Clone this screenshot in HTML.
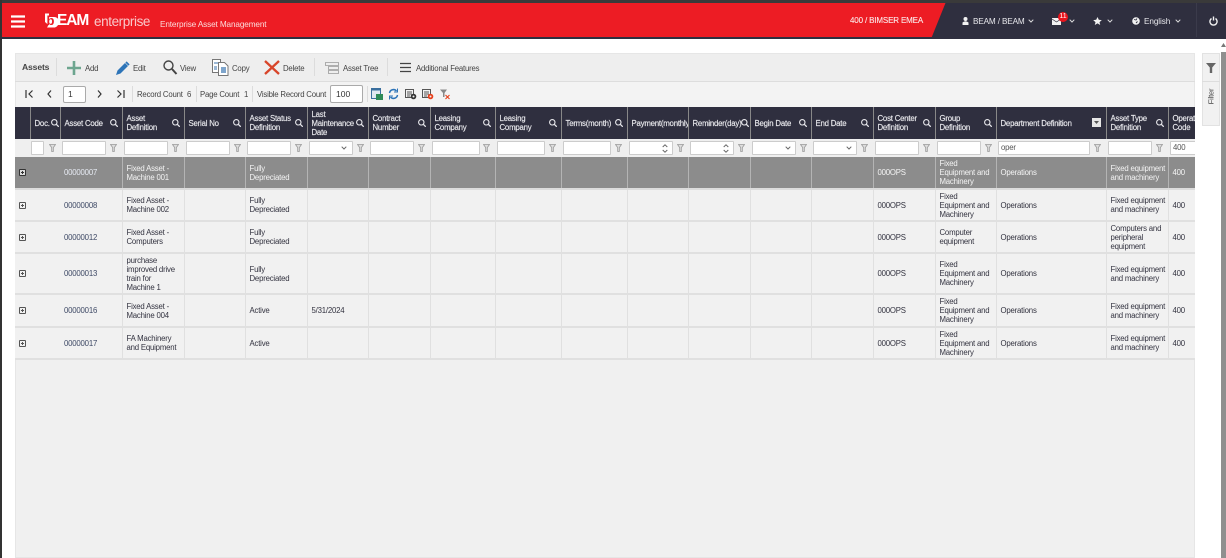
<!DOCTYPE html>
<html><head><meta charset="utf-8"><style>
html,body{margin:0;padding:0;width:1226px;height:558px;overflow:hidden;background:#fff;font-family:"Liberation Sans",sans-serif}
#w{position:absolute;left:0;top:0;width:1226px;height:558px;overflow:hidden;filter:blur(.3px)}
.a{position:absolute}
.t{position:absolute;white-space:nowrap;font-size:7.8px;letter-spacing:-.2px;color:#444;line-height:9px}
table{position:absolute;left:15px;top:107px;width:1194px;border-collapse:collapse;table-layout:fixed;font-size:7.8px;letter-spacing:-.2px;line-height:9px;color:#333340}
.clip{position:absolute;left:15px;top:107px;width:1180px;height:253px;overflow:hidden}
.clip table{left:0;top:0}
th{background:#2f2f3f;color:#e8e8ec;font-weight:normal;text-align:left;padding:0 0 0 4px;border-right:1px solid #888;height:32px;overflow:hidden;position:relative;white-space:nowrap;-webkit-text-stroke:.15px #e8e8ec}
tr.f td{background:#efefef;height:18px;padding:0;border:0;border-right:0;position:relative}
tr.r td{background:#f1f1f1;border-right:1px solid #e0e0e0;border-bottom:2px solid #e0e0e0;padding:0 0 0 4px;overflow:hidden}
tr.r td:first-child,tr.r td:nth-child(2){border-right:0}
tr.s td{background:#8c8c8c;color:#f4f4f4;border-right:1px solid #b4b4b4;border-bottom:2px solid #dcdcdc}
tr.r td.c{color:#3f4a66}
tr.s td.c{color:#e6eaf2}
.i{position:absolute;left:2px;top:2px;height:14px;background:#fff;border:1px solid #ccc;border-radius:1px;box-sizing:border-box;font-size:7.8px;color:#555;line-height:12px;padding-left:2px}
svg{position:absolute;overflow:visible}
.q{position:absolute;right:4px;top:12px;width:8px;height:8px}
.fl{position:absolute;top:5px;width:7px;height:8px}
.pm{display:block;width:5px;height:5px;border:1px solid #555;border-radius:1px;position:relative;margin-left:0}
.pm:before{content:"";position:absolute;left:1px;top:2px;width:3px;height:1px;background:#555}
.pm:after{content:"";position:absolute;left:2px;top:1px;width:1px;height:3px;background:#555}
.s .pm{border-color:#333;background:#ddd}.s .pm:before,.s .pm:after{background:#333}
.sep{position:absolute;width:1px;background:#dcdcdc}
</style></head><body><div id="w">
<svg width="0" height="0" style="position:absolute"><defs>
<symbol id="q" viewBox="0 0 8 8"><circle cx="3.3" cy="3.3" r="2.7" fill="none" stroke="#e8e8ec" stroke-width="1.1"/><path d="M5.300 5.300l2.500 2.500" stroke="#e8e8ec" stroke-width="1.300"/></symbol>
<symbol id="fl" viewBox="0 0 7 8"><path d="M.5.5h6L4.300 3.600V7.500H2.700V3.600z" fill="#ddd" stroke="#999" stroke-width=".8"/></symbol>
</defs></svg>

<!-- top bar -->
<div class="a" style="left:0;top:0;width:1226px;height:3px;background:#3a3a3a"></div>
<div class="a" style="left:0;top:0;width:2px;height:558px;background:#333"></div>
<div class="a" style="left:2px;top:3px;width:1224px;height:34px;background:#ed1c24"></div>
<div class="a" style="left:0;top:37px;width:1226px;height:2px;background:#2f2f3f"></div>
<svg style="left:0;top:3px" width="1226" height="34"><path d="M945.500 0H1226V36H931z" fill="#2f2f3f"/><path d="M1196.500 0V34" stroke="#3b3b4b"/></svg>
<svg style="left:11px;top:15px" width="15" height="13"><path d="M0 1.500h14M0 6.500h14M0 11.500h14" stroke="#fff" stroke-width="2.200"/></svg>
<svg style="left:44px;top:13px" width="16" height="15"><path d="M1 .5h4V4h5q4 0 5 4 0 5-4 6.500H3L4.500 12 1 9z" fill="#fff"/></svg>
<div class="t" style="left:46.500px;top:14px;font-size:13px;letter-spacing:0;line-height:13px;font-weight:bold;color:#ed1c24">b</div>
<div class="t" style="left:57px;top:13px;font-size:15.500px;line-height:15px;font-weight:bold;color:#fff;letter-spacing:-1.100px">EAM</div>
<div class="t" style="left:94px;top:14px;font-size:13.500px;line-height:16px;color:#f9c8ca;letter-spacing:-.4px">enterprise</div>
<div class="t" style="left:160px;top:20px;font-size:8.200px;letter-spacing:-.12px;color:#fbdcdc">Enterprise Asset Management</div>
<div class="t" style="left:850px;top:16px;font-size:8px;letter-spacing:-.15px;color:#fbe6e6;-webkit-text-stroke:.12px #fbe6e6">400 / BIMSER EMEA</div>
<svg style="left:962px;top:17px" width="7" height="8"><circle cx="3.500" cy="2" r="2" fill="#f2f2f2"/><path d="M.5 8V5.500Q3.500 3 6.500 5.500V8z" fill="#f2f2f2"/></svg>
<div class="t" style="left:973px;top:17px;font-size:8.200px;letter-spacing:-.15px;color:#e8e8ec">BEAM / BEAM</div>
<svg style="left:1028px;top:19px" width="6" height="4"><path d="M.7.700L3 3l2.300-2.300" stroke="#ddd" fill="none"/></svg>
<svg style="left:1052px;top:18px" width="9" height="7"><rect width="9" height="7" fill="#f2f2f2"/><path d="M0 1l4.500 3L9 1" stroke="#2f2f3f" fill="none" stroke-width=".7"/></svg>
<div class="a" style="left:1058px;top:12px;width:10px;height:10px;border-radius:5px;background:#e8141c;color:#fff;font-size:7px;line-height:10px;text-align:center">11</div>
<svg style="left:1069px;top:19px" width="6" height="4"><path d="M.7.700L3 3l2.300-2.300" stroke="#ddd" fill="none"/></svg>
<svg style="left:1093px;top:17px" width="9" height="8"><path d="M4.500 0l1.300 2.800 3 .3-2.300 2 .7 2.900-2.700-1.600L1.800 8l.7-2.900-2.300-2 3-.3z" fill="#f2f2f2"/></svg>
<svg style="left:1107px;top:19px" width="6" height="4"><path d="M.7.700L3 3l2.300-2.300" stroke="#ddd" fill="none"/></svg>
<svg style="left:1132px;top:17px" width="8" height="8"><circle cx="4" cy="4" r="3.800" fill="#f2f2f2"/><path d="M2 2.500l2 .5 1-1.500M4 6l1.500-1.500" stroke="#2f2f3f" stroke-width=".9" fill="none"/></svg>
<div class="t" style="left:1144px;top:17px;font-size:8.200px;letter-spacing:-.1px;color:#e8e8ec">English</div>
<svg style="left:1175px;top:19px" width="6" height="4"><path d="M.7.700L3 3l2.300-2.300" stroke="#ddd" fill="none"/></svg>
<svg style="left:1209px;top:16px" width="9" height="10"><path d="M2.500 2.500a3.600 3.600 0 1 0 4 0" fill="none" stroke="#f4f4f4" stroke-width="1.400"/><path d="M4.500 .5V4.500" stroke="#f4f4f4" stroke-width="1.400"/></svg>

<!-- panel -->
<div class="a" style="left:15px;top:53px;width:1180px;height:505px;background:#f0f0f0;box-shadow:inset 0 0 0 1px #e6e6e6"></div>
<div class="a" style="left:16px;top:54px;width:1178px;height:27px;background:#eee"></div>
<div class="a" style="left:15px;top:81px;width:1180px;height:1px;background:#ddd"></div>
<div class="a" style="left:16px;top:82px;width:1178px;height:25px;background:#f3f3f3"></div>

<div class="t" style="left:22px;top:63px;font-size:8.600px;letter-spacing:-.15px;font-weight:bold;color:#444">Assets</div>
<div class="sep" style="left:56px;top:58px;height:18px"></div>
<svg style="left:67px;top:61px" width="14" height="14"><path d="M7 0V14M0 7H14" stroke="#6da58f" stroke-width="2.600"/></svg>
<div class="t" style="left:85px;top:64px">Add</div>
<svg style="left:115px;top:61px" width="15" height="15"><path d="M1 14L2.500 9.500 10 2l3 3-7.500 7.500z" fill="#2d74b8"/><path d="M11 1l3 3" stroke="#2d74b8" stroke-width="1.800"/></svg>
<div class="t" style="left:133px;top:64px">Edit</div>
<svg style="left:163px;top:60px" width="14" height="15"><circle cx="5.500" cy="5.500" r="4.500" fill="none" stroke="#444" stroke-width="1.400"/><path d="M9 9l4.500 5" stroke="#444" stroke-width="2"/></svg>
<div class="t" style="left:180px;top:64px">View</div>
<svg style="left:212px;top:59px" width="17" height="17"><path d="M.5.500h8v13h-8z" fill="#fff" stroke="#777"/><path d="M6.500 3.500h6l3.500 3.500v9.500h-9.500z" fill="#fff" stroke="#777"/><path d="M2 3h4v2H2zM2 7h3v4H2z" fill="#9db9d6"/><path d="M9 8h5v6H9z" fill="#7ea5cc"/></svg>
<div class="t" style="left:232px;top:64px">Copy</div>
<svg style="left:264px;top:60px" width="16" height="15"><path d="M1 1l14 13M15 1L1 14" stroke="#d8452a" stroke-width="2.300"/></svg>
<div class="t" style="left:283px;top:64px">Delete</div>
<div class="sep" style="left:314px;top:58px;height:18px"></div>
<svg style="left:325px;top:62px" width="14" height="12"><path d="M.5.500h13v3H.5zM3.500 4.500h10v3h-10zM3.500 8.500h10v3h-10z" fill="none" stroke="#999" stroke-width=".8"/></svg>
<div class="t" style="left:343px;top:64px">Asset Tree</div>
<div class="sep" style="left:387px;top:58px;height:18px"></div>
<svg style="left:400px;top:62px" width="11" height="11"><path d="M0 1.500h11M0 5.500h11M0 9.500h11" stroke="#444" stroke-width="1.300"/></svg>
<div class="t" style="left:416px;top:64px">Additional Features</div>

<!-- pager -->
<svg style="left:25px;top:90px" width="9" height="8"><path d="M1 0v8" stroke="#333" stroke-width="1.200"/><path d="M7.500.5L4 4l3.500 3.500" fill="none" stroke="#333" stroke-width="1.200"/></svg>
<svg style="left:47px;top:90px" width="5" height="8"><path d="M4 .5L1 4l3 3.500" fill="none" stroke="#333" stroke-width="1.200"/></svg>
<div class="a" style="left:63px;top:86px;width:23px;height:17px;box-sizing:border-box;background:#fff;border:1px solid #aaa;border-radius:2px;font-size:8.500px;line-height:15px;padding-left:4px;color:#333">1</div>
<svg style="left:97px;top:90px" width="5" height="8"><path d="M1 .5L4 4 1 7.500" fill="none" stroke="#333" stroke-width="1.200"/></svg>
<svg style="left:116px;top:90px" width="9" height="8"><path d="M8 0v8" stroke="#333" stroke-width="1.200"/><path d="M1.500.5L5 4 1.500 7.500" fill="none" stroke="#333" stroke-width="1.200"/></svg>
<div class="sep" style="left:132px;top:86px;height:16px"></div>
<div class="t" style="left:137px;top:90px">Record Count</div>
<div class="t" style="left:187px;top:90px">6</div>
<div class="sep" style="left:196px;top:86px;height:16px"></div>
<div class="t" style="left:200px;top:90px">Page Count</div>
<div class="t" style="left:244px;top:90px">1</div>
<div class="sep" style="left:252px;top:86px;height:16px"></div>
<div class="t" style="left:257px;top:90px">Visible Record Count</div>
<div class="a" style="left:330px;top:85px;width:33px;height:18px;box-sizing:border-box;background:#fff;border:1px solid #aaa;border-radius:2px;font-size:8.500px;line-height:16px;padding-left:5px;color:#333">100</div>
<div class="sep" style="left:367px;top:86px;height:16px"></div>
<svg style="left:371px;top:88px" width="12" height="12"><path d="M.5.500h9v10h-9z" fill="#dfe8f0" stroke="#3a6f9e"/><path d="M.5.500h9v2h-9z" fill="#3a6f9e"/><rect x="5" y="6" width="7" height="6" fill="#2e8b57"/></svg>
<svg style="left:388px;top:88px" width="11" height="12"><path d="M1.500 5a4 4 0 0 1 7-2M9.500 7a4 4 0 0 1-7 2" fill="none" stroke="#2d74b8" stroke-width="1.500"/><path d="M9.500 .5v3.500H6M1.500 11.500V8H5" fill="none" stroke="#2d74b8" stroke-width="1"/></svg>
<svg style="left:405px;top:89px" width="12" height="11"><path d="M.5.500h8v8h-8zM2 3h5M2 5h5M2 7h3" fill="#f3f3f3" stroke="#555"/><circle cx="8.500" cy="7.500" r="2.800" fill="#333"/><circle cx="8.500" cy="7.500" r="1" fill="#eee"/></svg>
<svg style="left:422px;top:89px" width="12" height="11"><path d="M.5.500h8v8h-8zM2 3h5M2 5h5M2 7h3" fill="#f3f3f3" stroke="#555"/><circle cx="8.500" cy="7.500" r="2.800" fill="#e8401c"/><circle cx="8.500" cy="7.500" r="1" fill="#eee"/></svg>
<svg style="left:440px;top:89px" width="10" height="11"><path d="M0 .5h7L4.500 4v4H3V4z" fill="#888"/><path d="M5.500 6l4 4M9.500 6l-4 4" stroke="#e8401c" stroke-width="1.100"/></svg>

<!-- grid -->
<div class="clip"><table>
<colgroup><col style="width:15px"><col style="width:30px"><col style="width:62px"><col style="width:62px"><col style="width:61px"><col style="width:62px"><col style="width:61px"><col style="width:62px"><col style="width:65px"><col style="width:66px"><col style="width:66px"><col style="width:61px"><col style="width:62px"><col style="width:61px"><col style="width:62px"><col style="width:62px"><col style="width:61px"><col style="width:110px"><col style="width:62px"><col style="width:43px"></colgroup>
<tr>
<th></th>
<th>Doc.<svg class="q" style="right:1px"><use href="#q"/></svg></th>
<th>Asset Code<svg class="q"><use href="#q"/></svg></th>
<th>Asset<br>Definition<svg class="q"><use href="#q"/></svg></th>
<th>Serial No<svg class="q"><use href="#q"/></svg></th>
<th>Asset Status<br>Definition<svg class="q"><use href="#q"/></svg></th>
<th>Last<br>Maintenance<br>Date<svg class="q"><use href="#q"/></svg></th>
<th>Contract<br>Number<svg class="q"><use href="#q"/></svg></th>
<th>Leasing<br>Company<svg class="q"><use href="#q"/></svg></th>
<th>Leasing<br>Company<svg class="q"><use href="#q"/></svg></th>
<th>Terms(month)<svg class="q" style="right:4px"><use href="#q"/></svg></th>
<th>Payment(monthly</th>
<th>Reminder(day)<svg class="q" style="right:1px"><use href="#q"/></svg></th>
<th>Begin Date<svg class="q"><use href="#q"/></svg></th>
<th>End Date<svg class="q"><use href="#q"/></svg></th>
<th>Cost Center<br>Definition<svg class="q"><use href="#q"/></svg></th>
<th>Group<br>Definition<svg class="q"><use href="#q"/></svg></th>
<th>Department Definition<span class="a" style="right:5px;top:11px;width:9px;height:9px;background:#e6e6e6"><svg style="left:2px;top:3px" width="5" height="3"><path d="M0 0h5L2.500 3z" fill="#555"/></svg></span></th>
<th>Asset Type<br>Definition<svg class="q"><use href="#q"/></svg></th>
<th>Operating<br>Code</th>
</tr>
<tr class="f">
<td></td>
<td><span class="i" style="left:1px;width:13px"></span><svg class="fl" style="left:19px"><use href="#fl"/></svg></td>
<td><span class="i" style="width:44px"></span><svg class="fl" style="left:50px"><use href="#fl"/></svg></td>
<td><span class="i" style="width:44px"></span><svg class="fl" style="left:50px"><use href="#fl"/></svg></td>
<td><span class="i" style="width:44px"></span><svg class="fl" style="left:50px"><use href="#fl"/></svg></td>
<td><span class="i" style="width:44px"></span><svg class="fl" style="left:50px"><use href="#fl"/></svg></td>
<td><span class="i" style="width:44px"></span><svg style="left:34px;top:7px" width="6" height="4"><path d="M.7.700L3 3l2.300-2.300" stroke="#666" fill="none"/></svg><svg class="fl" style="left:50px"><use href="#fl"/></svg></td>
<td><span class="i" style="width:44px"></span><svg class="fl" style="left:50px"><use href="#fl"/></svg></td>
<td><span class="i" style="width:48px"></span><svg class="fl" style="left:53px"><use href="#fl"/></svg></td>
<td><span class="i" style="width:48px"></span><svg class="fl" style="left:54px"><use href="#fl"/></svg></td>
<td><span class="i" style="width:48px"></span><svg class="fl" style="left:54px"><use href="#fl"/></svg></td>
<td><span class="i" style="width:44px"></span><svg style="left:35px;top:5px" width="6" height="9"><path d="M.7 3L3 .8 5.300 3M.7 6L3 8.200 5.300 6" stroke="#666" fill="none"/></svg><svg class="fl" style="left:50px"><use href="#fl"/></svg></td>
<td><span class="i" style="width:44px"></span><svg style="left:35px;top:5px" width="6" height="9"><path d="M.7 3L3 .8 5.300 3M.7 6L3 8.200 5.300 6" stroke="#666" fill="none"/></svg><svg class="fl" style="left:50px"><use href="#fl"/></svg></td>
<td><span class="i" style="width:44px"></span><svg style="left:35px;top:7px" width="6" height="4"><path d="M.7.700L3 3l2.300-2.300" stroke="#666" fill="none"/></svg><svg class="fl" style="left:50px"><use href="#fl"/></svg></td>
<td><span class="i" style="width:44px"></span><svg style="left:35px;top:7px" width="6" height="4"><path d="M.7.700L3 3l2.300-2.300" stroke="#666" fill="none"/></svg><svg class="fl" style="left:50px"><use href="#fl"/></svg></td>
<td><span class="i" style="width:44px"></span><svg class="fl" style="left:50px"><use href="#fl"/></svg></td>
<td><span class="i" style="width:44px"></span><svg class="fl" style="left:50px"><use href="#fl"/></svg></td>
<td><span class="i" style="width:92px">oper</span><svg class="fl" style="left:98px"><use href="#fl"/></svg></td>
<td><span class="i" style="width:44px"></span><svg class="fl" style="left:50px"><use href="#fl"/></svg></td>
<td><span class="i" style="width:40px">400</span></td>
</tr>
<tr class="r s" style="height:32px"><td style="padding-left:4px"><span class="pm"></span></td><td></td><td class="c">00000007</td><td>Fixed Asset -<br>Machine 001</td><td></td><td>Fully<br>Depreciated</td><td></td><td></td><td></td><td></td><td></td><td></td><td></td><td></td><td></td><td>000OPS</td><td>Fixed<br>Equipment and<br>Machinery</td><td>Operations</td><td>Fixed equipment<br>and machinery</td><td>400</td></tr>
<tr class="r" style="height:32px"><td style="padding-left:4px"><span class="pm"></span></td><td></td><td class="c">00000008</td><td>Fixed Asset -<br>Machine 002</td><td></td><td>Fully<br>Depreciated</td><td></td><td></td><td></td><td></td><td></td><td></td><td></td><td></td><td></td><td>000OPS</td><td>Fixed<br>Equipment and<br>Machinery</td><td>Operations</td><td>Fixed equipment<br>and machinery</td><td>400</td></tr>
<tr class="r" style="height:32px"><td style="padding-left:4px"><span class="pm"></span></td><td></td><td class="c">00000012</td><td>Fixed Asset -<br>Computers</td><td></td><td>Fully<br>Depreciated</td><td></td><td></td><td></td><td></td><td></td><td></td><td></td><td></td><td></td><td>000OPS</td><td>Computer<br>equipment</td><td>Operations</td><td>Computers and<br>peripheral<br>equipment</td><td>400</td></tr>
<tr class="r" style="height:41px"><td style="padding-left:4px"><span class="pm"></span></td><td></td><td class="c">00000013</td><td>purchase<br>improved drive<br>train for<br>Machine 1</td><td></td><td>Fully<br>Depreciated</td><td></td><td></td><td></td><td></td><td></td><td></td><td></td><td></td><td></td><td>000OPS</td><td>Fixed<br>Equipment and<br>Machinery</td><td>Operations</td><td>Fixed equipment<br>and machinery</td><td>400</td></tr>
<tr class="r" style="height:33px"><td style="padding-left:4px"><span class="pm"></span></td><td></td><td class="c">00000016</td><td>Fixed Asset -<br>Machine 004</td><td></td><td>Active</td><td>5/31/2024</td><td></td><td></td><td></td><td></td><td></td><td></td><td></td><td></td><td>000OPS</td><td>Fixed<br>Equipment and<br>Machinery</td><td>Operations</td><td>Fixed equipment<br>and machinery</td><td>400</td></tr>
<tr class="r" style="height:32px"><td style="padding-left:4px"><span class="pm"></span></td><td></td><td class="c">00000017</td><td>FA Machinery<br>and Equipment</td><td></td><td>Active</td><td></td><td></td><td></td><td></td><td></td><td></td><td></td><td></td><td></td><td>000OPS</td><td>Fixed<br>Equipment and<br>Machinery</td><td>Operations</td><td>Fixed equipment<br>and machinery</td><td>400</td></tr>
</table></div>

<!-- filter tab + scrollbar -->
<div class="a" style="left:1202px;top:53px;width:18px;height:73px;background:#f1f1f1;box-shadow:inset 0 0 0 1px #e2e2e2"></div>
<div class="a" style="left:1202px;top:81px;width:18px;height:1px;background:#ddd"></div>
<svg style="left:1206px;top:63px" width="10" height="10"><path d="M0 0h10L6.200 4.500V10H3.800V4.500z" fill="#666"/></svg>
<div class="t" style="left:1194px;top:92px;width:34px;text-align:center;transform:rotate(-90deg);font-size:7.600px;color:#444">Filter</div>
<div class="a" style="left:1221px;top:52px;width:5px;height:506px;background:#8f8f8f"></div>
<svg style="left:1221px;top:42px" width="5" height="5"><path d="M0 5L2.500 1 5 5z" fill="#777"/></svg>
</div></body></html>
